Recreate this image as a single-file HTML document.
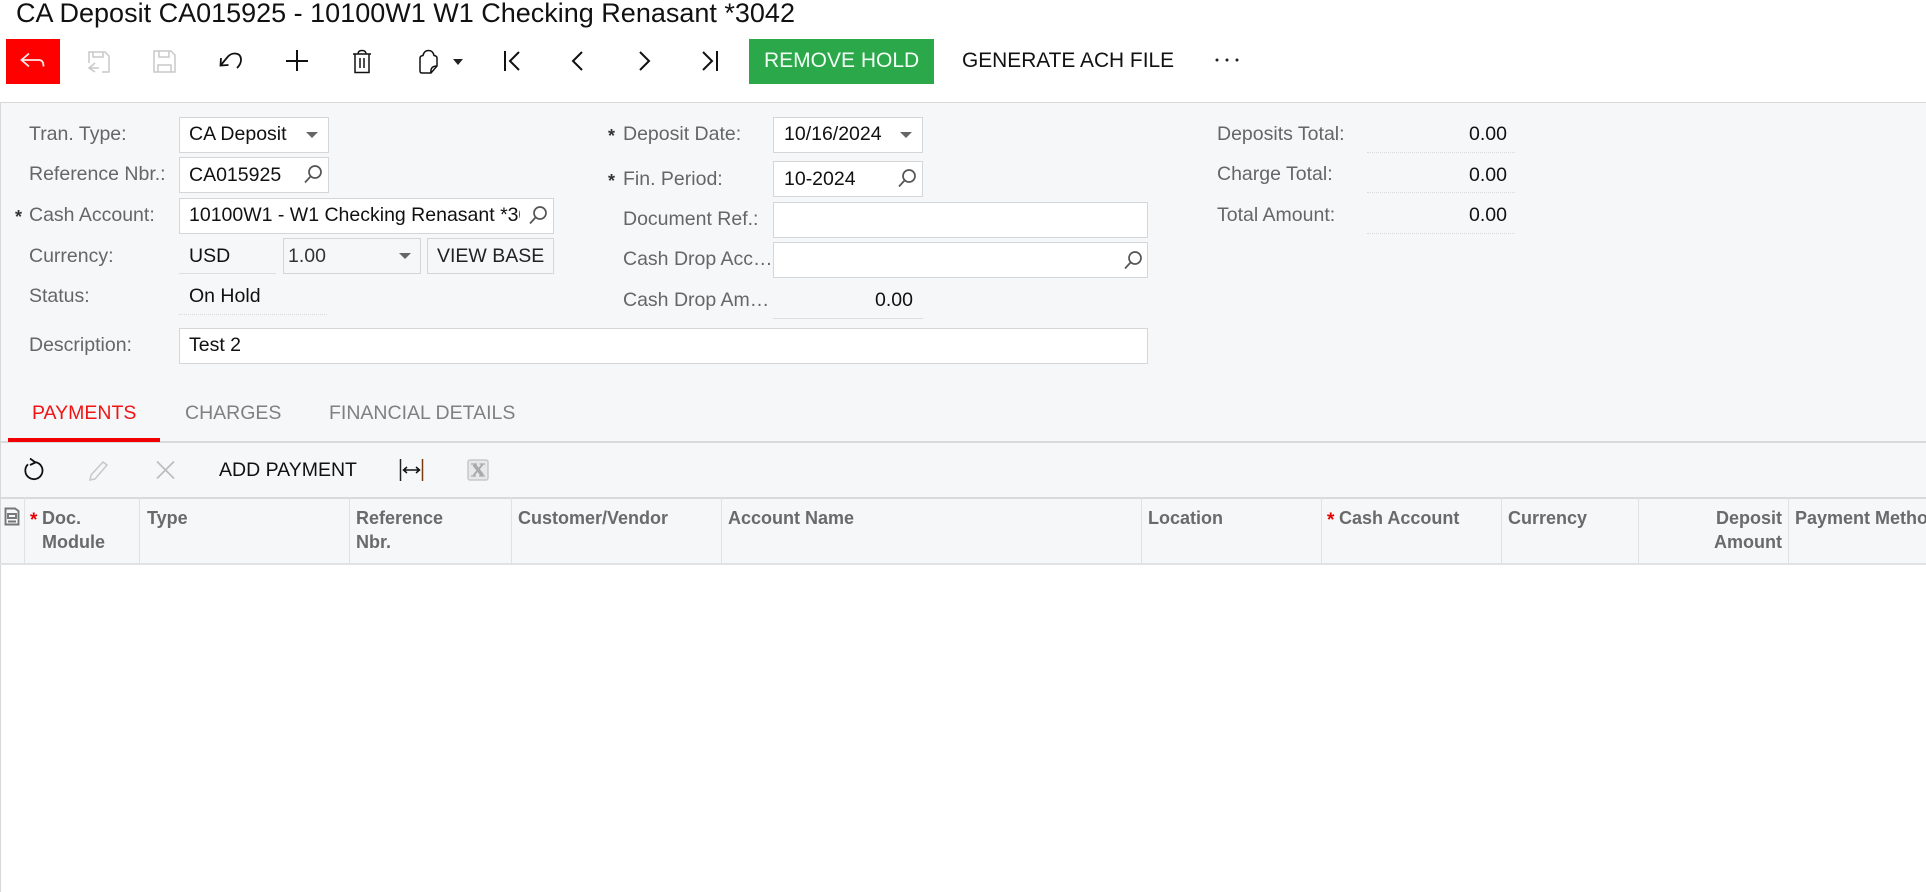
<!DOCTYPE html>
<html><head><meta charset="utf-8"><style>
html,body{margin:0;padding:0;background:#fff;}
#p{position:relative;width:1926px;height:892px;overflow:hidden;background:#fff;font-family:"Liberation Sans",sans-serif;color:#111;}
#p div,#p svg{position:absolute;}
.t{white-space:nowrap;line-height:30px;height:30px;}
.l{font-size:19.5px;color:#666;}
.v{font-size:19.5px;color:#111;}
.b{background:#fff;border:1.5px solid #d4d6d8;box-sizing:border-box;}
.u{height:1px;background:#dcdee0;}
.d{height:0;border-bottom:1px dotted #d8dadc;}
.h{font-size:18px;font-weight:bold;color:#6a6a6a;}
.c{top:497px;width:1px;height:67px;background:#dfe1e3;}
.s{font-size:19px;color:#222;}
.ar{width:0;height:0;border-left:6px solid transparent;border-right:6px solid transparent;border-top:6px solid #666;}
.st{font-size:18px;font-weight:bold;color:#333;}
</style></head><body><div id="p">
<div class="t" style="left:16px;top:-2px;font-size:27px;color:#111;">CA Deposit CA015925 - 10100W1 W1 Checking Renasant *3042</div>

<div style="left:6px;top:39px;width:54px;height:45px;background:#ff0000;"></div>
<svg style="left:20px;top:50px" width="26" height="22" viewBox="0 0 26 22" fill="none" stroke="#fde8e8" stroke-width="1.800"><path d="M9 3.500 L1.500 10 L9 16.500 M1.500 10 H19 Q23.500 10 23.500 16.500"/></svg>
<svg style="left:85px;top:49px" width="26" height="26" viewBox="0 0 26 26" fill="none" stroke="#c9c9c9" stroke-width="1.500"><path d="M4 14 V3 H20 L24 7 V23 H17 M8 3 V8 H18 V3"/><path d="M10 14 L4 19 L10 23 M4 19 H14"/></svg>
<svg style="left:151px;top:49px" width="26" height="25" viewBox="0 0 26 25" fill="none" stroke="#c9c9c9" stroke-width="1.500"><path d="M3 2 H20 L24 6 V23 H3 Z M8 2 V8 H18 V2 M7 23 V16 H20 V23"/></svg>
<svg style="left:218px;top:50px" width="24" height="22" viewBox="0 0 24 22" fill="none" stroke="#111" stroke-width="1.800"><path d="M3 8 L2.500 15.500 L10.500 15 M2.500 15.500 L10 6.500 Q13 3.500 16.500 3.500 Q23 3.500 23 10 Q23 14 19 18"/></svg>
<svg style="left:286px;top:50px" width="22" height="22" viewBox="0 0 22 22" fill="none" stroke="#111" stroke-width="2"><path d="M0 11 H22 M11 0 V21"/></svg>
<svg style="left:352px;top:49px" width="20" height="25" viewBox="0 0 20 25" fill="none" stroke="#111" stroke-width="1.500"><path d="M1 5 H19 M3 5 V23.500 H17 V5 M6 5 Q6 1.500 10 1.500 Q14 1.500 14 5 M8 9 V19 M12 9 V19"/></svg>
<svg style="left:418px;top:49px" width="21" height="26" viewBox="0 0 21 26" fill="none" stroke="#111" stroke-width="1.500"><path d="M2 9 Q2 7 5 6.500 Q6 1.500 10.500 1.500 Q15 1.500 16 6.500 Q19 7 19 9 V17 L13 24 H4 Q2 24 2 22 Z M13 24 Q12 17 19 17"/></svg>
<div class="ar" style="left:453px;top:59px;border-top-color:#222;border-left-width:5.500px;border-right-width:5.500px;"></div>
<svg style="left:503px;top:50px" width="18" height="22" viewBox="0 0 18 22" fill="none" stroke="#111" stroke-width="2"><path d="M2 1 V21 M16 2 L7 11 L16 20"/></svg>
<svg style="left:571px;top:51px" width="13" height="20" viewBox="0 0 13 20" fill="none" stroke="#111" stroke-width="2"><path d="M11 1 L2 10 L11 19"/></svg>
<svg style="left:638px;top:51px" width="13" height="20" viewBox="0 0 13 20" fill="none" stroke="#111" stroke-width="2"><path d="M2 1 L11 10 L2 19"/></svg>
<svg style="left:701px;top:50px" width="18" height="22" viewBox="0 0 18 22" fill="none" stroke="#111" stroke-width="2"><path d="M16 1 V21 M2 2 L11 11 L2 20"/></svg>
<div style="left:749px;top:39px;width:185px;height:45px;background:#2aa84a;"></div>
<div class="t" style="left:764px;top:46px;font-size:21px;color:#f2fff5;">REMOVE HOLD</div>
<div class="t" style="left:962px;top:46px;font-size:20.900px;color:#111;">GENERATE ACH FILE</div>
<svg style="left:1212px;top:56px" width="32" height="8"><circle cx="5" cy="4" r="1.500" fill="#222"/><circle cx="15" cy="4" r="1.500" fill="#222"/><circle cx="25" cy="4" r="1.500" fill="#222"/></svg>

<div style="left:0;top:102px;width:1926px;height:462px;background:#f5f7f9;border-top:1.500px solid #d6d8da;box-sizing:border-box;"></div>
<div style="left:0;top:102px;width:1px;height:790px;background:#d6d8da;"></div>

<div class="t l" style="left:29px;top:119px;">Tran. Type:</div>
<div class="t l" style="left:29px;top:159px;">Reference Nbr.:</div>
<div class="t l" style="left:29px;top:200px;">Cash Account:</div>
<div class="t l" style="left:29px;top:241px;">Currency:</div>
<div class="t l" style="left:29px;top:281px;">Status:</div>
<div class="t l" style="left:29px;top:330px;">Description:</div>
<div class="t st" style="left:15px;top:202px;">*</div>

<div class="b" style="left:179px;top:117px;width:150px;height:36px;"></div>
<div class="t v" style="left:189px;top:119px;">CA Deposit</div>
<div class="ar" style="left:306px;top:132px;"></div>
<div class="b" style="left:179px;top:157px;width:150px;height:36px;"></div>
<div class="t v" style="left:189px;top:160px;">CA015925</div>
<svg style="left:303px;top:164px" width="20" height="21" viewBox="0 0 20 21" fill="none" stroke="#555" stroke-width="1.700"><circle cx="12" cy="8" r="6"/><path d="M7.500 12.500 L2 18.500"/></svg>
<div class="b" style="left:179px;top:198px;width:375px;height:36px;"></div>
<div class="t v" style="left:189px;top:200px;width:331px;overflow:hidden;">10100W1 - W1 Checking Renasant *3042</div>
<svg style="left:528px;top:205px" width="20" height="21" viewBox="0 0 20 21" fill="none" stroke="#555" stroke-width="1.700"><circle cx="12" cy="8" r="6"/><path d="M7.500 12.500 L2 18.500"/></svg>
<div class="t v" style="left:189px;top:241px;">USD</div>
<div class="u" style="left:179px;top:273px;width:97px;"></div>
<div class="b" style="left:283px;top:238px;width:138px;height:36px;background:#f5f7f9;"></div>
<div class="t v" style="left:288px;top:241px;color:#333;">1.00</div>
<div class="ar" style="left:399px;top:253px;"></div>
<div class="b" style="left:427px;top:238px;width:127px;height:36px;background:#f5f7f9;"></div>
<div class="t s" style="left:437px;top:241px;font-size:19.500px;">VIEW BASE</div>
<div class="t v" style="left:189px;top:281px;">On Hold</div>
<div class="d" style="left:179px;top:314px;width:148px;"></div>
<div class="b" style="left:179px;top:328px;width:969px;height:36px;"></div>
<div class="t v" style="left:189px;top:330px;">Test 2</div>

<div class="t st" style="left:608px;top:121px;">*</div>
<div class="t st" style="left:608px;top:166px;">*</div>
<div class="t l" style="left:623px;top:119px;">Deposit Date:</div>
<div class="t l" style="left:623px;top:164px;">Fin. Period:</div>
<div class="t l" style="left:623px;top:204px;">Document Ref.:</div>
<div class="t l" style="left:623px;top:244px;">Cash Drop Acc…</div>
<div class="t l" style="left:623px;top:285px;">Cash Drop Am…</div>
<div class="b" style="left:773px;top:117px;width:150px;height:36px;"></div>
<div class="t v" style="left:784px;top:119px;">10/16/2024</div>
<div class="ar" style="left:900px;top:132px;"></div>
<div class="b" style="left:773px;top:161px;width:150px;height:36px;"></div>
<div class="t v" style="left:784px;top:164px;">10-2024</div>
<svg style="left:897px;top:168px" width="20" height="21" viewBox="0 0 20 21" fill="none" stroke="#555" stroke-width="1.700"><circle cx="12" cy="8" r="6"/><path d="M7.500 12.500 L2 18.500"/></svg>
<div class="b" style="left:773px;top:202px;width:375px;height:36px;"></div>
<div class="b" style="left:773px;top:242px;width:375px;height:36px;"></div>
<svg style="left:1123px;top:250px" width="20" height="21" viewBox="0 0 20 21" fill="none" stroke="#555" stroke-width="1.700"><circle cx="12" cy="8" r="6"/><path d="M7.500 12.500 L2 18.500"/></svg>
<div class="t v" style="right:1013px;top:285px;">0.00</div>
<div class="u" style="left:773px;top:318px;width:150px;"></div>

<div class="t l" style="left:1217px;top:119px;">Deposits Total:</div>
<div class="t l" style="left:1217px;top:159px;">Charge Total:</div>
<div class="t l" style="left:1217px;top:200px;">Total Amount:</div>
<div class="t v" style="right:419px;top:119px;">0.00</div>
<div class="t v" style="right:419px;top:160px;">0.00</div>
<div class="t v" style="right:419px;top:200px;">0.00</div>
<div class="d" style="left:1367px;top:152px;width:148px;"></div>
<div class="d" style="left:1367px;top:192px;width:148px;"></div>
<div class="d" style="left:1367px;top:233px;width:148px;"></div>

<div class="t" style="left:32px;top:398px;font-size:19.500px;color:#f01414;">PAYMENTS</div>
<div class="t" style="left:185px;top:398px;font-size:19.500px;color:#808080;">CHARGES</div>
<div class="t" style="left:329px;top:398px;font-size:19.500px;color:#808080;">FINANCIAL DETAILS</div>
<div style="left:0;top:441px;width:1926px;height:1.500px;background:#d8dadc;"></div>
<div style="left:8px;top:438px;width:152px;height:4px;background:#f00000;"></div>

<svg style="left:23px;top:457px" width="23" height="26" viewBox="0 0 23 26" fill="none" stroke="#111" stroke-width="1.800"><path d="M7 1.500 L12.500 5.500 L7 8"/><path d="M12.500 5.100 A8.600 8.600 0 1 1 5 7.300"/></svg>
<svg style="left:88px;top:460px" width="21" height="21" viewBox="0 0 21 21" fill="none" stroke="#c8c8c8" stroke-width="1.500"><path d="M15 2 L19 5 L7 19 L2 20 L3 15 Z"/></svg>
<svg style="left:156px;top:461px" width="19" height="18" viewBox="0 0 19 18" fill="none" stroke="#bdbdbd" stroke-width="1.700"><path d="M1 0.500 L18 17.500 M18 0.500 L1 17.500"/></svg>
<div class="t" style="left:219px;top:455px;font-size:19.500px;color:#111;">ADD PAYMENT</div>
<svg style="left:399px;top:458px" width="25" height="24" viewBox="0 0 25 24" fill="none" stroke="#111" stroke-width="1.500"><path d="M1.500 1 V23" stroke="#222"/><path d="M23.500 1 V23" stroke="#7a3a10"/><path d="M5 12 H20 M8 9 L4.500 12 L8 15 M17 9 L20.500 12 L17 15"/></svg>
<svg style="left:467px;top:459px" width="22" height="22" viewBox="0 0 22 22" fill="none"><rect x="1" y="1" width="20" height="20" rx="2" fill="#e6e8ea" stroke="#c8c8c8" stroke-width="1.500"/><path d="M7 5.500 L15.500 16.500" stroke="#a8aaac" stroke-width="3.500"/><path d="M15.500 5.500 L6.500 16.500" stroke="#a8aaac" stroke-width="1.800"/><path d="M4 5 H10 M12.500 5 H18 M4 17 H9 M12 17 H18" stroke="#a8aaac" stroke-width="1.200"/></svg>

<div style="left:0;top:497px;width:1926px;height:1.500px;background:#d8dadc;"></div>
<div style="left:0;top:563px;width:1926px;height:1.500px;background:#e0e2e4;"></div>
<div class="c" style="left:24px;"></div><div class="c" style="left:139px;"></div><div class="c" style="left:349px;"></div><div class="c" style="left:511px;"></div><div class="c" style="left:721px;"></div><div class="c" style="left:1141px;"></div><div class="c" style="left:1321px;"></div><div class="c" style="left:1501px;"></div><div class="c" style="left:1638px;"></div><div class="c" style="left:1788px;"></div>
<svg style="left:4px;top:507px" width="16" height="19" viewBox="0 0 16 19" fill="none" stroke="#777" stroke-width="1.900"><path d="M1.500 1.500 H11 L14.500 4 V17.500 H1.500 Z M4 7 H12 V11 H4 Z M4 14.500 H12"/></svg>

<div class="t" style="left:30px;top:506px;font-size:19px;font-weight:bold;color:#e60000;">*</div>
<div class="t h" style="left:42px;top:503px;">Doc.</div>
<div class="t h" style="left:42px;top:527px;">Module</div>
<div class="t h" style="left:147px;top:503px;">Type</div>
<div class="t h" style="left:356px;top:503px;">Reference</div>
<div class="t h" style="left:356px;top:527px;">Nbr.</div>
<div class="t h" style="left:518px;top:503px;">Customer/Vendor</div>
<div class="t h" style="left:728px;top:503px;">Account Name</div>
<div class="t h" style="left:1148px;top:503px;">Location</div>
<div class="t" style="left:1327px;top:506px;font-size:19px;font-weight:bold;color:#e60000;">*</div>
<div class="t h" style="left:1339px;top:503px;">Cash Account</div>
<div class="t h" style="left:1508px;top:503px;">Currency</div>
<div class="t h" style="right:144px;top:503px;">Deposit</div>
<div class="t h" style="right:144px;top:527px;">Amount</div>
<div class="t h" style="left:1795px;top:503px;">Payment Method</div>
</div></body></html>
